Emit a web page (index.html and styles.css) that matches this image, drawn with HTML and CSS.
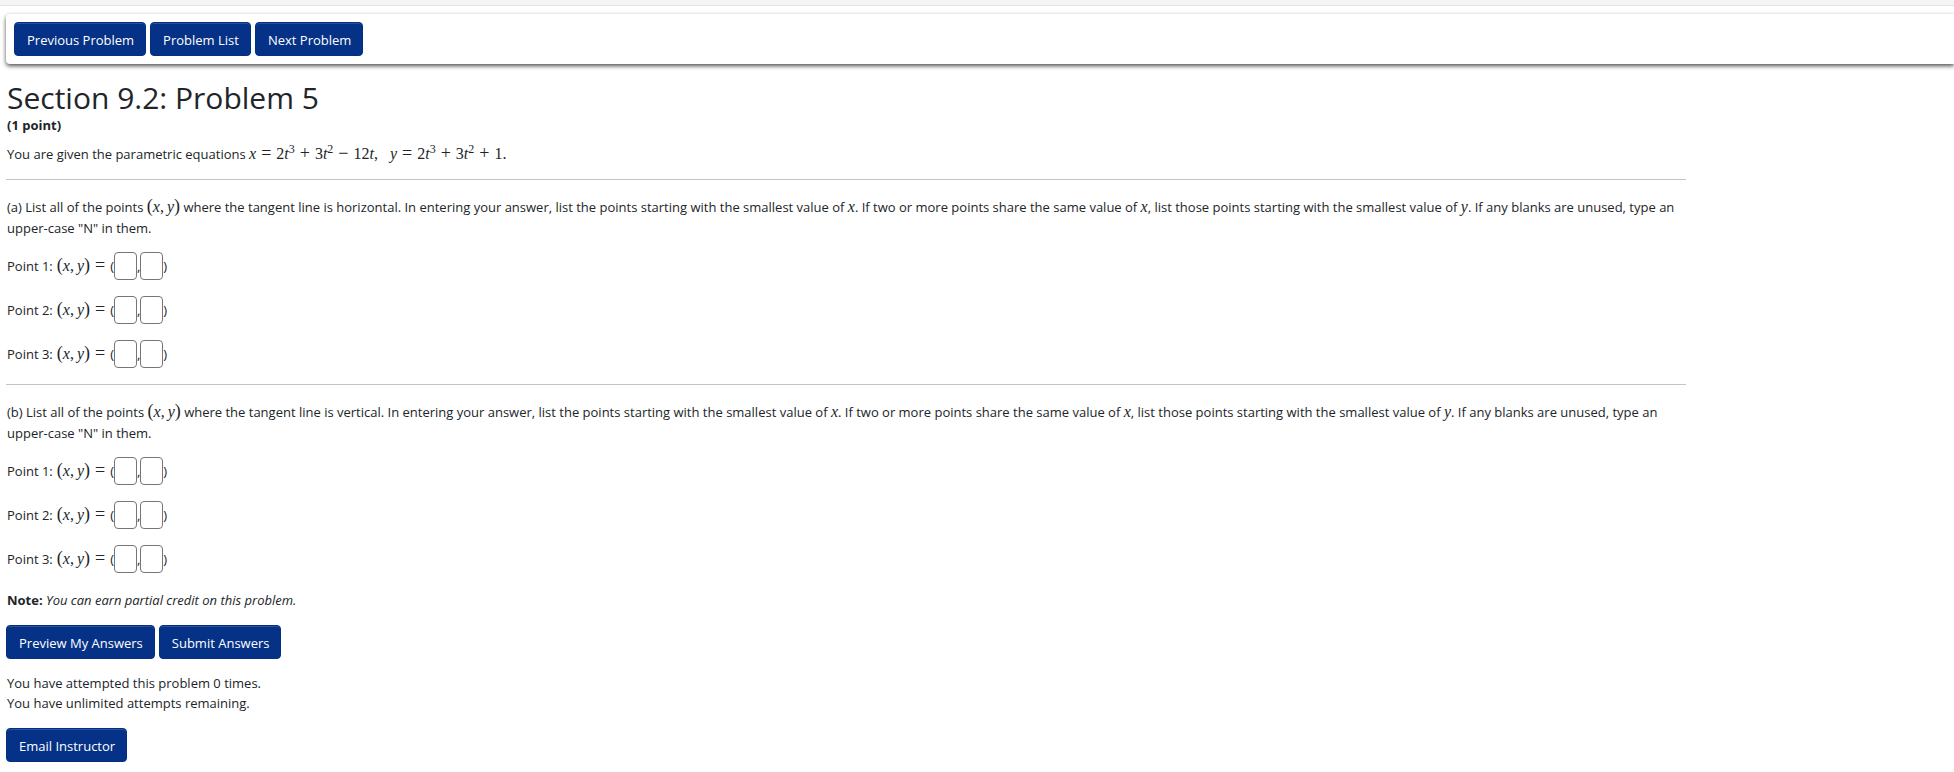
FILE: index.html
```html
<!DOCTYPE html>
<html lang="en">
<head>
<meta charset="utf-8">
<title>Section 9.2: Problem 5</title>
<link rel="stylesheet" href="styles.css">
</head>
<body>
<div class="topbar"></div>
<nav class="problem-nav" aria-label="Problem navigation">
  <button class="btn" type="button">Previous Problem</button>
  <button class="btn" type="button">Problem List</button>
  <button class="btn" type="button">Next Problem</button>
</nav>
<main class="content">
  <h1 class="title">Section 9.2: Problem 5</h1>
  <p class="points">(1 point)</p>
  <form class="problem">
    <p class="given">You are given the parametric equations <span class="math"><i>x</i><span class="op">=</span>2<i>t</i><sup>3</sup><span class="op">+</span>3<i>t</i><sup>2</sup><span class="op">−</span>12<i>t</i>,<span class="quad"></span><i>y</i><span class="op">=</span>2<i>t</i><sup>3</sup><span class="op">+</span>3<i>t</i><sup>2</sup><span class="op">+</span>1.</span></p>
    <hr class="rule">
    <p class="question">(a) List all of the points <span class="math"><span class="par">(</span><i>x</i>,<span class="thin"></span><i>y</i><span class="par">)</span></span> where the tangent line is horizontal. In entering your answer, list the points starting with the smallest value of <span class="math"><i>x</i></span>. If two or more points share the same value of <span class="math"><i>x</i></span>, list those points starting with the smallest value of <span class="math"><i>y</i></span>. If any blanks are unused, type an <span class="keep">upper-case</span> "N" in them.</p>
    <div class="rows">
      <div class="row"><span>Point 1:</span><span class="math"><span class="par">(</span><i>x</i>,<span class="thin"></span><i>y</i><span class="par">)</span><span class="op">=</span></span><span class="pair">(<input class="blank" type="text" aria-label="Part a, point 1, x"><span class="comma">,</span><input class="blank" type="text" aria-label="Part a, point 1, y">)</span></div>
      <div class="row"><span>Point 2:</span><span class="math"><span class="par">(</span><i>x</i>,<span class="thin"></span><i>y</i><span class="par">)</span><span class="op">=</span></span><span class="pair">(<input class="blank" type="text" aria-label="Part a, point 2, x"><span class="comma">,</span><input class="blank" type="text" aria-label="Part a, point 2, y">)</span></div>
      <div class="row"><span>Point 3:</span><span class="math"><span class="par">(</span><i>x</i>,<span class="thin"></span><i>y</i><span class="par">)</span><span class="op">=</span></span><span class="pair">(<input class="blank" type="text" aria-label="Part a, point 3, x"><span class="comma">,</span><input class="blank" type="text" aria-label="Part a, point 3, y">)</span></div>
    </div>
    <hr class="rule">
    <p class="question">(b) List all of the points <span class="math"><span class="par">(</span><i>x</i>,<span class="thin"></span><i>y</i><span class="par">)</span></span> where the tangent line is vertical. In entering your answer, list the points starting with the smallest value of <span class="math"><i>x</i></span>. If two or more points share the same value of <span class="math"><i>x</i></span>, list those points starting with the smallest value of <span class="math"><i>y</i></span>. If any blanks are unused, type an <span class="keep">upper-case</span> "N" in them.</p>
    <div class="rows">
      <div class="row"><span>Point 1:</span><span class="math"><span class="par">(</span><i>x</i>,<span class="thin"></span><i>y</i><span class="par">)</span><span class="op">=</span></span><span class="pair">(<input class="blank" type="text" aria-label="Part b, point 1, x"><span class="comma">,</span><input class="blank" type="text" aria-label="Part b, point 1, y">)</span></div>
      <div class="row"><span>Point 2:</span><span class="math"><span class="par">(</span><i>x</i>,<span class="thin"></span><i>y</i><span class="par">)</span><span class="op">=</span></span><span class="pair">(<input class="blank" type="text" aria-label="Part b, point 2, x"><span class="comma">,</span><input class="blank" type="text" aria-label="Part b, point 2, y">)</span></div>
      <div class="row"><span>Point 3:</span><span class="math"><span class="par">(</span><i>x</i>,<span class="thin"></span><i>y</i><span class="par">)</span><span class="op">=</span></span><span class="pair">(<input class="blank" type="text" aria-label="Part b, point 3, x"><span class="comma">,</span><input class="blank" type="text" aria-label="Part b, point 3, y">)</span></div>
    </div>
    <p class="note"><b>Note:</b> <em>You can earn partial credit on this problem.</em></p>
    <div class="actions">
      <button class="btn" type="button">Preview My Answers</button>
      <button class="btn" type="button">Submit Answers</button>
    </div>
  </form>
  <p class="attempts">You have attempted this problem 0 times.<br>You have unlimited attempts remaining.</p>
  <div class="actions">
    <button class="btn" type="button">Email Instructor</button>
  </div>
</main>
</body>
</html>
```
FILE: styles.css
```css
* {
  box-sizing: border-box;
}

body {
  margin: 0;
  background: #fff;
  color: #212529;
  font: 13px/20px "Open Sans", "Noto Sans", sans-serif;
  overflow-x: hidden;
}

h1,
p {
  margin: 0;
  padding-left: 1px;
}

.topbar {
  height: 6px;
  background: #f4f4f4;
  border-bottom: 1px solid #e2e2e2;
}

.problem-nav {
  display: flex;
  gap: 4px;
  margin: 8px 0 0 6px;
  padding: 8px;
  border-radius: 4px 0 0 4px;
  box-shadow: 0 2px 4px #000000b0;
}

.btn {
  height: 34px;
  padding: 1px 11px 0 12px;
  border: 1px solid #033084;
  border-radius: 4px;
  background: #053286;
  box-shadow: inset 0 1px 0 #ffffff26;
  color: #fff;
  font: inherit;
}

.content {
  padding: 16px 0 8px 6px;
}

.title {
  font-size: 30px;
  font-weight: 500;
  line-height: 36px;
}

.points {
  line-height: 18px;
  font-weight: 700;
}

.problem {
  width: 86vw;
}

.given {
  margin-top: 10px;
  padding-bottom: 1px;
}

.rule {
  height: 1px;
  margin: 14px 0 17px;
  border: 0;
  background: #c4c4c4;
}

.question {
  line-height: 21px;
}

.math {
  font-family: "Liberation Serif", serif;
  font-size: 16px;
  line-height: 1px;
  white-space: nowrap;
}

.math sup {
  font-size: 12px;
  line-height: 1px;
}

.op {
  margin: 0 5px;
  font-size: 18px;
}

.par {
  font-size: 18px;
}

.thin {
  margin-left: 3px;
}

.quad {
  margin-left: 12px;
}

.keep {
  white-space: nowrap;
}

.rows {
  display: grid;
  gap: 16px;
  margin-top: 13px;
  padding: 0 0 2px 1px;
}

.row {
  display: flex;
  align-items: baseline;
  gap: 4px;
}

.row .op {
  margin-right: 1px;
}

.pair {
  display: flex;
  align-items: baseline;
}

.blank {
  width: 23px;
  height: 28px;
  padding: 0 4px;
  border: 1px solid #767676;
  border-radius: 4px;
  background: #fff;
  color: inherit;
  font: inherit;
}

.note {
  margin-top: 15px;
}

.actions {
  display: flex;
  gap: 4px;
  margin-top: 15px;
}

.attempts {
  margin-top: 14px;
}
```
